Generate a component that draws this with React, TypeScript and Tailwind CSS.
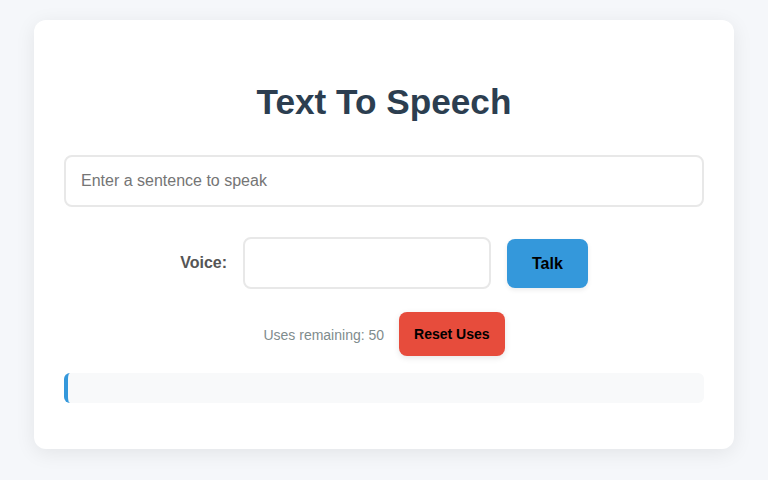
import React, { useState } from 'react';

const App: React.FC = () => {
  const [text, setText] = useState('');
  const [uses, setUses] = useState(50);

  return (
    <div className="min-h-screen bg-[#f5f7fa] pt-[20px] px-[34px] font-['Liberation_Sans',Arial,sans-serif]">
      <div className="bg-white rounded-[12px] shadow-[0_4px_20px_rgba(0,0,0,0.08)] p-[30px] pb-[46px]">
        <h1 className="mt-[32px] mb-[33px] text-center text-[35.2px] leading-[40px] font-bold text-[#2c3e50]">
          Text To Speech
        </h1>
        <input
          type="text"
          value={text}
          onChange={e => setText(e.target.value)}
          placeholder="Enter a sentence to speak"
          className="block w-full h-[52px] px-[15px] border-2 border-[#e8e8e8] rounded-[8px] text-[16px] text-[#333] placeholder:text-[#757575] outline-none"
        />
        <div className="mt-[30px] flex items-center justify-center gap-[16px]">
          <label className="text-[16px] font-bold text-[#555]">Voice:</label>
          <div className="w-[248px] h-[52px] border-2 border-[#e8e8e8] rounded-[8px] bg-white"></div>
          <button className="h-[49px] px-[25px] pt-[1px] bg-[#3498db] rounded-[8px] text-[16px] font-bold text-black shadow-[0_2px_5px_rgba(0,0,0,0.08)]">
            Talk
          </button>
        </div>
        <div className="mt-[23px] flex items-center justify-center gap-[15px]">
          <span className="pt-[3px] text-[14px] text-[#7f8c8d]">Uses remaining: {uses}</span>
          <button
            onClick={() => setUses(50)}
            className="h-[44px] px-[15px] bg-[#e74c3c] rounded-[8px] text-[14px] font-bold text-black shadow-[0_2px_6px_rgba(0,0,0,0.1)]"
          >
            Reset Uses
          </button>
        </div>
        <div className="mt-[17px] h-[30px] bg-[#f8f9fa] border-l-4 border-[#3498db] rounded-[6px]"></div>
      </div>
    </div>
  );
};

export default App;
